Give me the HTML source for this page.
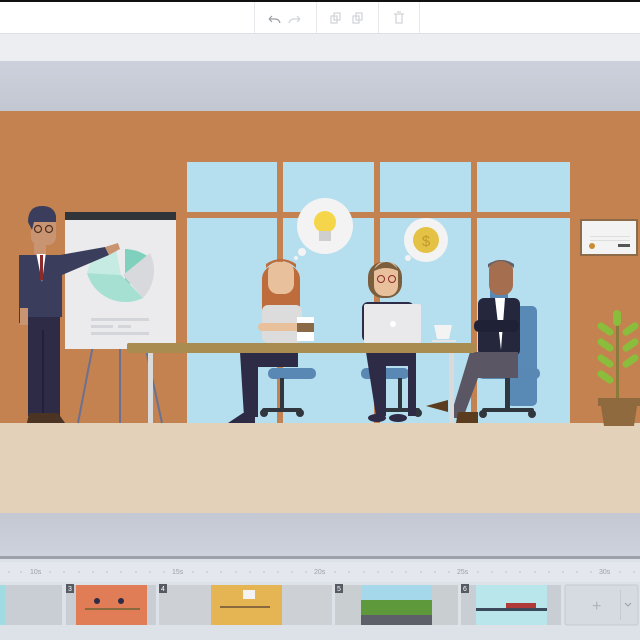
<!DOCTYPE html>
<html><head><meta charset="utf-8"><style>
html,body{margin:0;padding:0;width:640px;height:640px;overflow:hidden;background:#dde1e8;font-family:"Liberation Sans",sans-serif}
</style></head><body>
<svg width="640" height="640" viewBox="0 0 640 640" xmlns="http://www.w3.org/2000/svg">
<defs>
<linearGradient id="g1" x1="0" y1="0" x2="0" y2="1"><stop offset="0" stop-color="#cdd1dc"/><stop offset="1" stop-color="#c2c7d2"/></linearGradient>
<linearGradient id="g2" x1="0" y1="0" x2="0" y2="1"><stop offset="0" stop-color="#c3c8d3"/><stop offset="1" stop-color="#ced2dc"/></linearGradient>
</defs>
<!-- toolbar -->
<rect x="0" y="0" width="640" height="33" fill="#fff"/>
<rect x="0" y="0" width="640" height="2" fill="#111"/>
<rect x="0" y="33" width="640" height="1" fill="#dcdfe5"/>
<g fill="#e6e8ec"><rect x="254" y="2" width="1" height="31"/><rect x="316" y="2" width="1" height="31"/><rect x="378" y="2" width="1" height="31"/><rect x="419" y="2" width="1" height="31"/></g>
<g fill="none" stroke="#9a9ea6" stroke-width="1.2">
<path d="M269 19 l3 -3 M269 19 l3 3 M269 19 h6 q4 0 5 4"/>
</g>
<g fill="none" stroke="#d0d3d8" stroke-width="1.2">
<path d="M300 19 l-3 -3 M300 19 l-3 3 M300 19 h-6 q-4 0 -5 4"/>
<rect x="331" y="16" width="6" height="7"/><rect x="334" y="13" width="6" height="7"/>
<rect x="353" y="16" width="6" height="7"/><rect x="356" y="13" width="6" height="7"/>
<path d="M394 14 h10 M396 14 v9 h6 v-9 M397 12 h4"/>
</g>
<rect x="0" y="34" width="640" height="27" fill="#eceef2"/>
<rect x="0" y="61" width="640" height="50" fill="url(#g1)"/>
<!-- wall -->
<rect x="0" y="111" width="640" height="312" fill="#c3824f"/>
<!-- window -->
<rect x="187" y="162" width="383" height="261" fill="#b5dfee"/>
<g fill="#c3824f"><rect x="277" y="162" width="6" height="261"/><rect x="374" y="162" width="6" height="261"/><rect x="471" y="162" width="6" height="261"/><rect x="187" y="212" width="383" height="6"/></g>
<!-- certificate -->
<rect x="580" y="219" width="58" height="37" fill="#8d6a48"/>
<rect x="582" y="221" width="54" height="33" fill="#f3f3f3"/>
<rect x="590" y="236" width="40" height="1" fill="#ddd"/><rect x="590" y="240" width="40" height="1" fill="#ddd"/>
<circle cx="592" cy="246" r="3" fill="#c98b34"/><rect x="618" y="244" width="12" height="3" fill="#555"/>
<!-- floor -->
<rect x="0" y="423" width="640" height="90" fill="#e4d1ba"/>
<rect x="0" y="513" width="640" height="43" fill="url(#g2)"/>
<rect x="0" y="556" width="640" height="3" fill="#9ca1ab"/>
<!-- flipchart -->
<g stroke="#6c7191" stroke-width="2"><line x1="93" y1="345" x2="78" y2="423"/><line x1="120" y1="345" x2="120" y2="423"/><line x1="145" y1="345" x2="162" y2="423"/></g>
<rect x="65" y="212" width="111" height="137" fill="#ebebee"/>
<rect x="65" y="212" width="111" height="8" fill="#2f3538"/>
<path d="M125 290 L125 249 A41 41 0 0 1 150 258 Z" fill="#7fd1bd"/>
<path d="M123 275 L150 253 A40 40 0 0 1 143 298 Z" fill="#d8d9dc"/>
<path d="M121 275 L143 298 A40 40 0 0 1 87 273 Z" fill="#a5e0d2"/>
<path d="M121 275 L87 273 A36 36 0 0 1 115 244 Z" fill="#c5ebe2"/>
<g fill="#d3d5da"><rect x="91" y="318" width="58" height="3"/><rect x="91" y="325" width="22" height="3"/><rect x="118" y="325" width="13" height="3"/><rect x="91" y="332" width="58" height="3"/></g>
<!-- presenter -->
<rect x="28" y="312" width="32" height="104" fill="#2e2b47"/>
<rect x="42" y="330" width="2" height="86" fill="#242038"/>
<path d="M29 413 h16 v10 h-18z M45 413 h13 l7 10 h-20z" fill="#4b3424"/>
<path d="M22 255 h38 l45 -8 l4 8 l-47 20 v42 h-40z" fill="#3b3d5c"/>
<rect x="19" y="255" width="9" height="68" fill="#3b3d5c"/>
<rect x="20" y="308" width="8" height="17" fill="#c99472"/>
<path d="M105 247 l13 -4 l2 6 l-11 6z" fill="#c99472"/>
<path d="M36 252 h10 l-4 30 z" fill="#fff"/>
<rect x="40" y="255" width="3" height="25" fill="#8e2a2a"/>
<rect x="34" y="240" width="12" height="14" fill="#c99472"/>
<rect x="31" y="215" width="25" height="30" rx="8" fill="#c99472"/>
<path d="M28 222 q0 -16 14 -16 q12 0 14 10 v6 h-22 l-2 8z" fill="#3b3d5c"/>
<g fill="none" stroke="#4a3020" stroke-width="1.2"><circle cx="38" cy="229" r="3.5"/><circle cx="49" cy="229" r="3.5"/></g>
<!-- chairs -->
<g fill="#5a88b5">
<rect x="276" y="306" width="16" height="36" rx="3"/><rect x="268" y="368" width="48" height="11" rx="5"/>
<rect x="386" y="306" width="16" height="36" rx="3"/><rect x="361" y="368" width="48" height="11" rx="5"/>
<rect x="507" y="306" width="30" height="100" rx="5" fill="#5989b5"/><rect x="478" y="368" width="62" height="11" rx="5"/>
<rect x="490" y="283" width="18" height="30" rx="5"/>
</g>
<g fill="#30363d">
<rect x="280" y="378" width="4" height="30"/><rect x="262" y="408" width="40" height="4" rx="2"/><circle cx="264" cy="413" r="4"/><circle cx="300" cy="413" r="4"/>
<rect x="398" y="378" width="4" height="30"/><rect x="382" y="408" width="38" height="4" rx="2"/><circle cx="418" cy="413" r="4"/>
<rect x="505" y="378" width="5" height="30"/><rect x="482" y="408" width="52" height="4" rx="2"/><circle cx="483" cy="414" r="4"/><circle cx="532" cy="414" r="4"/>
</g>
<!-- woman 1 -->
<rect x="262" y="265" width="38" height="60" rx="14" fill="#bf6c3c"/>
<rect x="268" y="262" width="26" height="32" rx="10" fill="#e8c09c"/>
<path d="M266 268 q15 -14 30 0 v-4 q-15 -10 -30 0z" fill="#bf6c3c"/>
<rect x="262" y="305" width="40" height="38" rx="6" fill="#dcdcdc"/>
<rect x="258" y="323" width="45" height="8" rx="4" fill="#e8c09c"/>
<rect x="297" y="317" width="17" height="24" fill="#fff"/><rect x="297" y="323" width="17" height="9" fill="#8a6a46"/>
<path d="M240 352 h58 v15 h-40 v50 h-14z" fill="#2e2b47"/>
<path d="M228 423 l15 -10 h12 v10z" fill="#2e2b47"/>
<!-- bulb bubble -->
<circle cx="325" cy="226" r="28" fill="#f3f3f3"/><circle cx="302" cy="252" r="4" fill="#f3f3f3"/><circle cx="296" cy="258" r="2" fill="#f3f3f3"/>
<circle cx="325" cy="222" r="11" fill="#f5d64a"/><rect x="319" y="231" width="12" height="10" fill="#cfcfcf"/>
<!-- woman 2 -->
<rect x="368" y="262" width="34" height="36" rx="15" fill="#7a5e3e"/>
<rect x="374" y="262" width="24" height="34" rx="10" fill="#e8c09c"/>
<path d="M372 272 q14 -20 28 0 q-14 -8 -28 0z" fill="#7a5e3e"/>
<g fill="none" stroke="#8e2a2a" stroke-width="1"><circle cx="381" cy="279" r="3.5"/><circle cx="392" cy="279" r="3.5"/></g>
<rect x="362" y="302" width="52" height="40" rx="6" fill="#2e2b47"/>
<rect x="364" y="304" width="57" height="39" rx="2" fill="#e9e9eb"/><circle cx="393" cy="324" r="3" fill="#fff"/>
<path d="M366 352 h50 v64 h-8 v-50 h-22 v50 h-10 z" fill="#2e2b47"/>
<ellipse cx="377" cy="418" rx="9" ry="4" fill="#2e2b47"/><ellipse cx="398" cy="418" rx="9" ry="4" fill="#2e2b47"/>
<!-- coin bubble -->
<circle cx="426" cy="240" r="22" fill="#f3f3f3"/><circle cx="408" cy="258" r="3" fill="#f3f3f3"/>
<circle cx="426" cy="240" r="13" fill="#e4c245"/><text x="426" y="246" font-size="15" text-anchor="middle" fill="#c29a2c" font-family="Liberation Sans">$</text>
<!-- cup -->
<path d="M434 325 h18 l-3 14 h-12z" fill="#f3f3f3"/><rect x="432" y="340" width="24" height="2" fill="#e5e5e5"/>
<!-- man -->
<rect x="489" y="260" width="24" height="35" rx="10" fill="#a56e4e"/>
<path d="M488 268 q12 -14 26 0 v-4 q-12 -8 -26 0z" fill="#63636b"/>
<rect x="478" y="298" width="42" height="58" rx="6" fill="#25283d"/>
<path d="M495 298 h10 l-4 52 z" fill="#fff"/>
<rect x="474" y="320" width="45" height="12" rx="5" fill="#1f2236"/>
<path d="M470 352 h48 v26 h-40 l-15 40 h-13z" fill="#5a5663"/>
<path d="M426 406 l22 -6 v12z" fill="#5b3c1e"/><path d="M458 412 h20 v11 h-22z" fill="#5b3c1e"/>
<!-- table -->
<rect x="148" y="352" width="5" height="71" fill="#dadada"/><rect x="449" y="352" width="5" height="71" fill="#dadada"/>
<rect x="127" y="343" width="348" height="10" rx="2" fill="#a98c4f"/>
<!-- plant -->
<rect x="616" y="312" width="3" height="90" fill="#8a7a3c"/>
<g fill="#8bbd3c">
<rect x="613" y="310" width="8" height="16" rx="4"/>
<g transform="rotate(35 606 330)"><rect x="596" y="326" width="18" height="7" rx="3.5"/></g>
<g transform="rotate(35 606 346)"><rect x="596" y="342" width="18" height="7" rx="3.5"/></g>
<g transform="rotate(35 606 362)"><rect x="596" y="358" width="18" height="7" rx="3.5"/></g>
<g transform="rotate(35 606 378)"><rect x="596" y="374" width="18" height="7" rx="3.5"/></g>
<g transform="rotate(-35 630 330)"><rect x="622" y="326" width="18" height="7" rx="3.5"/></g>
<g transform="rotate(-35 630 346)"><rect x="622" y="342" width="18" height="7" rx="3.5"/></g>
<g transform="rotate(-35 630 362)"><rect x="622" y="358" width="18" height="7" rx="3.5"/></g>
</g>
<rect x="598" y="398" width="42" height="8" fill="#8f6a3f"/><path d="M601 406 h36 l-3 20 h-30z" fill="#8f6a3f"/>
<!-- timeline -->
<rect x="0" y="559" width="640" height="81" fill="#dde1e8"/>
<rect x="0" y="562" width="640" height="20" fill="#e4e7ed"/>
<g font-size="7" fill="#9aa0aa"><text x="30" y="574">10s</text><text x="172" y="574">15s</text><text x="314" y="574">20s</text><text x="457" y="574">25s</text><text x="599" y="574">30s</text></g>
<g fill="#b8bcc4">
<circle cx="9" cy="572" r=".8"/><circle cx="21" cy="572" r=".8"/><circle cx="50" cy="572" r=".8"/><circle cx="64" cy="572" r=".8"/><circle cx="79" cy="572" r=".8"/><circle cx="93" cy="572" r=".8"/><circle cx="107" cy="572" r=".8"/><circle cx="121" cy="572" r=".8"/><circle cx="136" cy="572" r=".8"/><circle cx="150" cy="572" r=".8"/><circle cx="164" cy="572" r=".8"/>
<circle cx="193" cy="572" r=".8"/><circle cx="207" cy="572" r=".8"/><circle cx="221" cy="572" r=".8"/><circle cx="236" cy="572" r=".8"/><circle cx="250" cy="572" r=".8"/><circle cx="264" cy="572" r=".8"/><circle cx="278" cy="572" r=".8"/><circle cx="292" cy="572" r=".8"/><circle cx="306" cy="572" r=".8"/>
<circle cx="335" cy="572" r=".8"/><circle cx="349" cy="572" r=".8"/><circle cx="364" cy="572" r=".8"/><circle cx="378" cy="572" r=".8"/><circle cx="392" cy="572" r=".8"/><circle cx="406" cy="572" r=".8"/><circle cx="421" cy="572" r=".8"/><circle cx="435" cy="572" r=".8"/><circle cx="449" cy="572" r=".8"/>
<circle cx="478" cy="572" r=".8"/><circle cx="492" cy="572" r=".8"/><circle cx="506" cy="572" r=".8"/><circle cx="520" cy="572" r=".8"/><circle cx="535" cy="572" r=".8"/><circle cx="549" cy="572" r=".8"/><circle cx="563" cy="572" r=".8"/><circle cx="577" cy="572" r=".8"/><circle cx="591" cy="572" r=".8"/><circle cx="620" cy="572" r=".8"/><circle cx="634" cy="572" r=".8"/>
</g>
<!-- thumbs -->
<rect x="0" y="585" width="62" height="40" fill="#c9ced5"/><rect x="0" y="585" width="5" height="40" fill="#9fdbe0"/>
<rect x="66" y="585" width="90" height="40" fill="#c9ced5"/><rect x="76" y="585" width="71" height="40" fill="#e07c56"/>
<rect x="66" y="584" width="8" height="9" fill="#555a63"/><text x="68" y="591" font-size="7" fill="#fff">3</text>
<rect x="85" y="608" width="55" height="2" fill="#8a6a3c"/><circle cx="97" cy="601" r="3" fill="#2e2b47"/><circle cx="121" cy="601" r="3" fill="#2e2b47"/>
<rect x="159" y="585" width="173" height="40" fill="#cdd0d4"/><rect x="211" y="585" width="71" height="40" fill="#e6b553"/>
<rect x="159" y="584" width="8" height="9" fill="#555a63"/><text x="161" y="591" font-size="7" fill="#fff">4</text>
<rect x="243" y="590" width="12" height="9" fill="#f3f3f3"/><rect x="220" y="606" width="50" height="2" fill="#8a6a3c"/>
<rect x="335" y="585" width="123" height="40" fill="#c9ced0"/><rect x="361" y="585" width="71" height="40" fill="#a5d8ea"/>
<rect x="361" y="600" width="71" height="15" fill="#5e9a3c"/><rect x="361" y="615" width="71" height="10" fill="#5d6069"/>
<rect x="335" y="584" width="8" height="9" fill="#555a63"/><text x="337" y="591" font-size="7" fill="#fff">5</text>
<rect x="461" y="585" width="100" height="40" fill="#c9ced5"/><rect x="476" y="585" width="71" height="40" fill="#b8e6ea"/>
<rect x="476" y="608" width="71" height="3" fill="#3a4a5a"/><rect x="506" y="603" width="30" height="5" fill="#b03a3a"/>
<rect x="461" y="584" width="8" height="9" fill="#555a63"/><text x="463" y="591" font-size="7" fill="#fff">6</text>
<rect x="565" y="585" width="73" height="40" rx="2" fill="#d6dae1" stroke="#c5c9d0"/>
<text x="592" y="611" font-size="16" fill="#aeb3bb">+</text>
<rect x="620" y="590" width="1" height="30" fill="#c5c9d0"/>
<path d="M625 603 l3 3 l3 -3" fill="none" stroke="#9aa0aa"/>
</svg>
</body></html>
